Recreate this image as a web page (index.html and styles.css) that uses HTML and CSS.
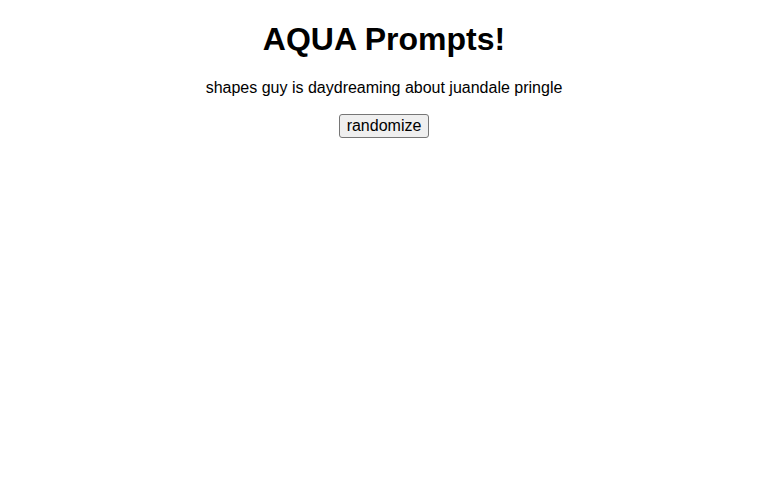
FILE: index.html
```html
<!doctype html>
<html lang="en">
<head>
  <meta charset="utf-8">
  <title>AQUA Prompts!</title>
  <link rel="stylesheet" href="styles.css">
</head>
<body>
<main class="wrap">
  <h1>AQUA Prompts!</h1>
  <p id="prompt">shapes guy is daydreaming about juandale pringle</p>
  <p class="actions"><button id="randomize">randomize</button></p>
</main>
</body>
</html>
```

FILE: styles.css
```css
body{font-family:'Liberation Sans',Arial,sans-serif;background:#fff;color:#000;margin:0;padding:0 8px;}
.wrap{text-align:center;}
h1{font-size:32px;margin:21px 0 21.44px;}
p{font-size:16px;margin:16px 0;}
.actions{margin-top:17px;}
button{font-family:inherit;font-size:16px;color:#000;background:#efefef;border:1px solid #767676;border-radius:3px;padding:2px 7px;cursor:pointer;}
button:hover{background:#e5e5e5;}
```
